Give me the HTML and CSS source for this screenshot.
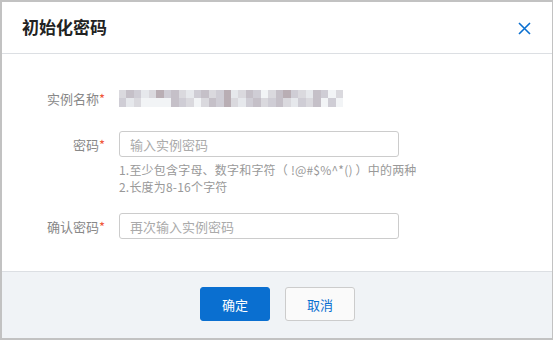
FILE: index.html
```html
<!DOCTYPE html>
<html lang="zh-CN">
<head>
  <meta charset="UTF-8" />
  <title>初始化密码</title>
  <link rel="stylesheet" href="styles.css">
</head>
<body>
  <div class="dialog">
    <div class="dialog-header">
      <h2>初始化密码</h2>
      <span class="close">
        <svg width="13" height="13" viewBox="0 0 13 13"><path d="M1 1 L12 12 M12 1 L1 12" stroke="#0a6fd0" stroke-width="1.6" fill="none"/></svg>
      </span>
    </div>

    <div class="dialog-body">
      <div class="row">
        <label>实例名称<i>*</i></label>
        <div class="mosaic">
          <span class="m2"></span><span class="m3"></span><span class="m1"></span><span class="m4"></span><span class="m2"></span><span class="m5"></span><span class="m1"></span><span class="m3"></span><span class="m2"></span><span class="m4"></span>
          <span class="m1"></span><span class="m3"></span><span class="m2"></span><span class="m1"></span><span class="m5"></span><span class="m4"></span><span class="m2"></span><span class="m3"></span><span class="m1"></span><span class="m6"></span>
          <span class="m2"></span><span class="m3"></span><span class="m5"></span><span class="m1"></span><span class="m2"></span><span class="m4"></span><span class="m3"></span><span class="m1"></span><span class="m6"></span><span class="m2"></span>
          <span class="m1"></span><span class="m4"></span><span class="m2"></span><span class="m6"></span><span class="m6"></span><span class="m6"></span><span class="m6"></span><span class="m3"></span><span class="m1"></span><span class="m2"></span>
          <span class="m6"></span><span class="m2"></span><span class="m3"></span><span class="m1"></span><span class="m5"></span><span class="m2"></span><span class="m4"></span><span class="m1"></span><span class="m3"></span><span class="m2"></span>
          <span class="m1"></span><span class="m3"></span><span class="m2"></span><span class="m4"></span><span class="m1"></span><span class="m2"></span><span class="m3"></span><span class="m6"></span><span class="m1"></span><span class="m6"></span>
        </div>
      </div>

      <div class="row">
        <label>密码<i>*</i></label>
        <input type="password" placeholder="输入实例密码">
      </div>
      <div class="hint">
        <p>1.至少包含字母、数字和字符（ !@#$%^*() ）中的两种</p>
        <p>2.长度为8-16个字符</p>
      </div>

      <div class="row confirm">
        <label>确认密码<i>*</i></label>
        <input type="password" placeholder="再次输入实例密码">
      </div>
    </div>

    <div class="dialog-footer">
      <button class="btn primary">确定</button>
      <button class="btn">取消</button>
    </div>
  </div>
</body>
</html>
```

FILE: styles.css
```css
* {
  box-sizing: border-box;
}
body {
  margin: 0;
  font-family: "Noto Sans CJK SC", "Liberation Sans", sans-serif;
  color: #333;
}
.dialog {
  width: 553px;
  height: 340px;
  border: 2px solid #c2c2c2;
  border-right-width: 1px;
  display: flex;
  flex-direction: column;
  background: #fff;
}
.dialog-header {
  height: 52px;
  border-bottom: 1px solid #dcdfe3;
  display: flex;
  align-items: center;
  justify-content: space-between;
  padding: 0 20px 0 20px;
}
.dialog-header h2 {
  margin: 0;
  font-size: 17px;
  font-weight: bold;
  color: #222;
  padding-bottom: 2px;
}
.close {
  display: flex;
  margin-top: 2px;
  margin-right: 1px;
}
.dialog-body {
  flex: 1;
  padding-top: 31px;
}
.row {
  display: flex;
  align-items: center;
  height: 26px;
  margin-bottom: 20px;
}
.row label {
  width: 103px;
  text-align: right;
  margin-right: 14px;
  font-size: 13px;
  color: #888;
}
.row label i {
  font-style: normal;
  color: #f0573a;
}
.mosaic {
  width: 224px;
  height: 17px;
  display: grid;
  grid-template-columns: repeat(30, 1fr);
  grid-template-rows: 8px 9px;
  margin-top: 1px;
}
.m1 { background: #cfcdd5; }
.m2 { background: #dad9de; }
.m3 { background: #c5c0c8; }
.m4 { background: #e6e8ec; }
.m5 { background: #b9aeb4; }
.m6 { background: #f2f4f6; }
input {
  width: 280px;
  height: 26px;
  border: 1px solid #ccc;
  border-radius: 3px;
  padding: 0 10px;
  font-family: inherit;
  font-size: 13px;
  color: #333;
  outline: none;
}
input::placeholder {
  color: #aaa;
}
.hint {
  margin: -16px 0 0 117px;
  font-size: 12px;
  letter-spacing: 0.2px;
  color: #999;
  line-height: 17px;
}
.hint p {
  margin: 0;
}
.confirm {
  margin-top: 18px;
}
.dialog-footer {
  height: 67px;
  border-top: 1px solid #dcdfe3;
  background: #f0f3f6;
  display: flex;
  justify-content: center;
  gap: 15px;
  padding-top: 15px;
  padding-left: 1px;
}
.btn {
  width: 70px;
  height: 34px;
  border: 1px solid #ccc;
  border-radius: 3px;
  background: #fafafa;
  color: #0a6fd0;
  font-family: inherit;
  font-size: 13px;
  cursor: pointer;
}
.btn.primary {
  background: #0a6fd0;
  border-color: #0a6fd0;
  color: #fff;
}
```
